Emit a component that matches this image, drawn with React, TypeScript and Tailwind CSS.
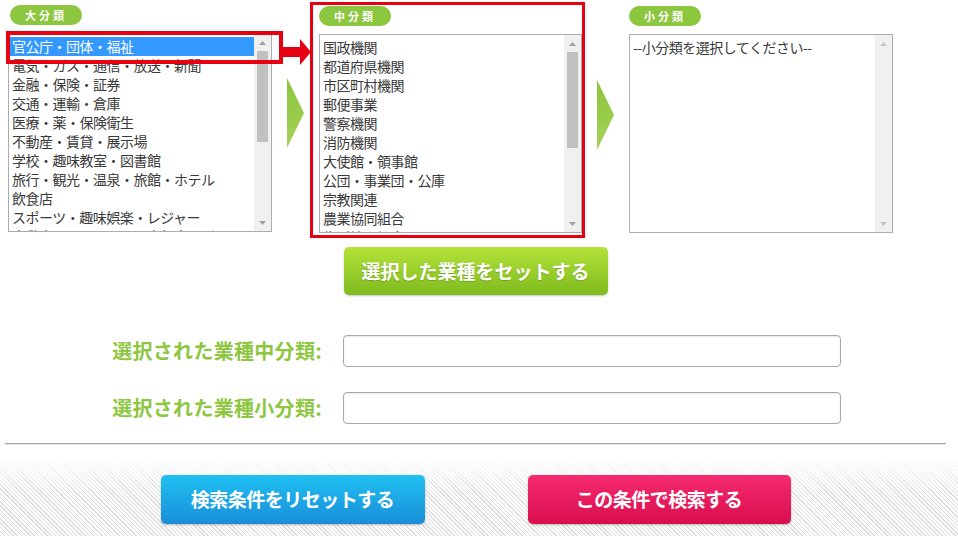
const LARGE = [
  "官公庁・団体・福祉",
  "電気・ガス・通信・放送・新聞",
  "金融・保険・証券",
  "交通・運輸・倉庫",
  "医療・薬・保険衛生",
  "不動産・賃貸・展示場",
  "学校・趣味教室・図書館",
  "旅行・観光・温泉・旅館・ホテル",
  "飲食店",
  "スポーツ・趣味娯楽・レジャー",
  "自動車・オートバイ・自転車・ガソリン",
];

const MIDDLE = [
  "国政機関",
  "都道府県機関",
  "市区町村機関",
  "郵便事業",
  "警察機関",
  "消防機関",
  "大使館・領事館",
  "公団・事業団・公庫",
  "宗教関連",
  "農業協同組合",
  "生活協同組合",
];

function Pill({ label }: { label: string }) {
  return (
    <div className="flex h-[20px] w-[72px] items-center justify-center rounded-full bg-[#8dc63f] text-[11px] font-bold leading-none tracking-[3px] text-white">
      {label}
    </div>
  );
}

function Arrow({ up, dim }: { up?: boolean; dim?: boolean }) {
  return (
    <div className="flex h-[17px] items-center justify-center">
      <svg width="7" height="4" viewBox="0 0 7 4">
        <polygon
          points={up ? "0,4 3.5,0 7,4" : "0,0 3.5,4 7,0"}
          fill={dim ? "#c4c4c4" : "#a0a0a0"}
        />
      </svg>
    </div>
  );
}

function Scrollbar({ thumb }: { thumb?: number }) {
  return (
    <div className="flex w-[17px] flex-col bg-[#f0f0f0]">
      <Arrow up dim={!thumb} />
      <div className="flex-1 px-[3px]">
        {thumb ? (
          <div className="w-full bg-[#c1c1c1]" style={{ height: thumb }} />
        ) : null}
      </div>
      <Arrow dim={!thumb} />
    </div>
  );
}

function ListBox({
  items,
  selected,
  thumb,
}: {
  items: string[];
  selected?: number;
  thumb?: number;
}) {
  return (
    <div className="flex h-[199px] w-full border border-[#a9adb3] bg-white">
      <div className="flex-1 overflow-hidden pt-[3px] text-[14px] leading-[19px] tracking-[-0.5px] text-[#3a3a3a]">
        {items.map((it, i) => (
          <div
            key={it}
            className={
              i === selected
                ? "whitespace-nowrap bg-[#3399ff] pl-[3px] text-white"
                : "whitespace-nowrap pl-[3px]"
            }
          >
            {it}
          </div>
        ))}
      </div>
      <Scrollbar thumb={thumb} />
    </div>
  );
}

function Chevron() {
  return (
    <svg width="17" height="70" viewBox="0 0 17 70">
      <defs>
        <linearGradient id="chev" x1="0" y1="0" x2="0" y2="1">
          <stop offset="0" stopColor="#8bc43a" />
          <stop offset="1" stopColor="#a6d25a" />
        </linearGradient>
      </defs>
      <polygon points="0,0 17,35 0,70" fill="url(#chev)" />
    </svg>
  );
}

export default function App() {
  return (
    <div className="min-h-[536px] bg-white font-['Noto_Sans_CJK_JP','Noto_Sans',sans-serif]">
      <div className="w-[951px]">
        {/* three lists */}
        <div className="flex items-start pl-[8px] pt-[2px]">
          <div className="relative w-[264px] pt-[3px]">
            <div className="ml-[2px]">
              <Pill label="大分類" />
            </div>
            <div className="relative mt-[8px]">
              <ListBox items={LARGE} selected={0} thumb={91} />
              <div className="absolute left-[-2px] top-[-2px] h-[33px] w-[277px] border-[4px] border-[#e60012]" />
              <svg
                className="absolute left-[274px] top-[6px]"
                width="29"
                height="26"
                viewBox="0 0 29 26"
              >
                <rect x="0" y="8" width="19" height="10" fill="#e60012" />
                <polygon points="18,0 29,13 18,26" fill="#e60012" />
              </svg>
            </div>
          </div>

          <div className="w-[38px] pl-[15px] pt-[76px]">
            <Chevron />
          </div>

          <div className="h-[236px] w-[275px] border-[3px] border-[#e60012] pl-[6px] pt-[1px]">
            <Pill label="中分類" />
            <div className="mt-[8px]">
              <ListBox items={MIDDLE} thumb={96} />
            </div>
          </div>

          <div className="w-[44px] pl-[12px] pt-[78px]">
            <Chevron />
          </div>

          <div className="w-[264px] pt-[4px]">
            <Pill label="小分類" />
            <div className="mt-[8px]">
              <ListBox items={["--小分類を選択してください--"]} />
            </div>
          </div>
        </div>

        <div className="mt-[9px] flex justify-center">
          <button className="h-[48px] w-[264px] rounded-[5px] bg-[linear-gradient(to_bottom,#b4e33a,#7fba1e)] text-[19px] font-bold text-white shadow-[0_1px_2px_rgba(0,0,0,0.25)] [text-shadow:0_1px_1px_rgba(0,0,0,0.2)]">
            選択した業種をセットする
          </button>
        </div>

        <div className="mt-[40px] grid grid-cols-[322px_498px] items-center gap-x-[21px] gap-y-[25px]">
          <div className="text-right text-[20px] font-bold tracking-[0.3px] text-[#8dc63f]">
            選択された業種中分類:
          </div>
          <input className="h-[32px] rounded-[4px] border border-[#a8a8a8] bg-white shadow-[inset_0_1px_2px_rgba(0,0,0,0.1)]" />
          <div className="text-right text-[20px] font-bold tracking-[0.3px] text-[#8dc63f]">
            選択された業種小分類:
          </div>
          <input className="h-[32px] rounded-[4px] border border-[#a8a8a8] bg-white shadow-[inset_0_1px_2px_rgba(0,0,0,0.1)]" />
        </div>

        <div className="mx-[5px] mt-[19px] h-[2px] border-t border-[#a9a9a9] bg-[#e4e4e4]" />
      </div>

      <div className="bg-[linear-gradient(to_bottom,#ffffff_12px,rgba(255,255,255,0)_48px),repeating-linear-gradient(45deg,#dedede_0px,#dedede_1px,#fbfbfb_1px,#fbfbfb_3px)] pb-[12px] pt-[30px]">
        <div className="flex w-[951px] justify-center gap-[103px]">
          <button className="h-[49px] w-[264px] rounded-[5px] bg-[linear-gradient(to_bottom,#1fc0f2,#1a8ed9)] text-[19px] font-bold tracking-[-0.5px] text-white shadow-[0_1px_2px_rgba(0,0,0,0.25)]">
            検索条件をリセットする
          </button>
          <button className="h-[49px] w-[263px] rounded-[5px] bg-[linear-gradient(to_bottom,#f52a70,#d80e4d)] text-[19px] font-bold tracking-[-0.5px] text-white shadow-[0_1px_2px_rgba(0,0,0,0.25)]">
            この条件で検索する
          </button>
        </div>
      </div>
    </div>
  );
}
